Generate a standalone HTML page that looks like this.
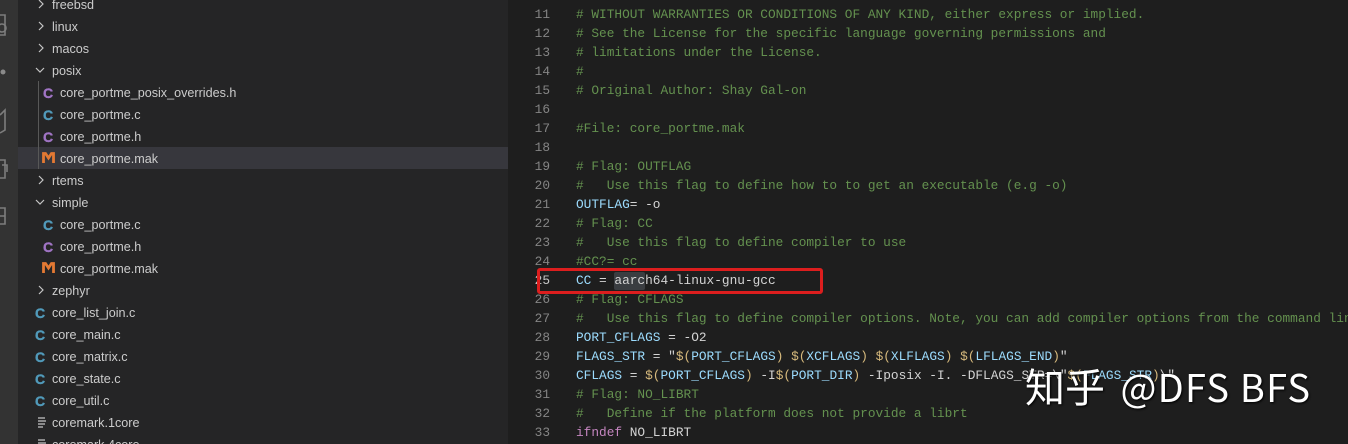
<!DOCTYPE html>
<html>
<head>
<meta charset="utf-8">
<style>
html,body{margin:0;padding:0;background:#1e1e1e;}
#p{position:relative;width:1348px;height:444px;overflow:hidden;background:#1e1e1e;}
#act{position:absolute;left:0;top:0;width:18px;height:444px;background:#333333;}
#side{position:absolute;left:18px;top:0;width:490px;height:444px;background:#252526;}
#sel{position:absolute;left:18px;top:147px;width:490px;height:22px;background:#37373d;}
#guide{position:absolute;left:38px;top:81px;width:1px;height:88px;background:#585858;}
.t{position:absolute;margin-top:1px;font:12.6px/22px "Liberation Sans",sans-serif;color:#cccccc;white-space:pre;height:22px;}
.c{position:absolute;margin-top:1px;font:bold 14px/22px "Liberation Sans",sans-serif;height:22px;-webkit-text-stroke:.4px currentColor;}
.b{color:#519aba}.v{color:#a074c4}
.ln{position:absolute;left:520px;width:30px;text-align:right;font:12.8px/19px "Liberation Mono",monospace;color:#858585;height:19px;}
.l{position:absolute;left:576px;font:12.8px/19px "Liberation Mono",monospace;color:#d4d4d4;white-space:pre;height:19px;}
.g{color:#64914f}.a{color:#9cdcfe}.o{color:#d7ba7d}.k{color:#c586c0}.d{color:#ce9178}
svg{position:absolute;overflow:visible;}
#hl{position:absolute;left:614px;top:272px;width:31px;height:18px;background:#3a3d41;border-radius:2px;}
#box{position:absolute;left:537px;top:268px;width:280px;height:20px;border:3px solid #dc1e1e;border-radius:3px;}
#wm{position:absolute;left:1025px;top:358px;font:38px/54px "Noto Sans CJK SC",sans-serif;color:#ffffff;white-space:pre;text-shadow:1px 1px 2px #000;}
#wm b{font-weight:400;font-size:40px;}
#wm i{font-style:normal;letter-spacing:1.2px;margin-left:7px;}
</style>
</head>
<body>
<div id="p">
<div id="act"></div>
<div id="side"></div>
<div id="sel"></div>
<div id="guide"></div>

<svg width="18" height="444" style="left:0;top:0" fill="none" stroke="#7d7d7d" stroke-width="1.6">
<path d="M0 15H5V35H0"/><circle cx="2" cy="28" r="4"/>
<circle cx="3" cy="72" r="2.5" fill="#8a8a8a" stroke="none"/>
<path d="M0 115L5 110V130L0 133"/>
<path d="M0 160H5V178H0M2 165H7V172"/>
<path d="M0 208H5V224H0M0 216H5"/>
</svg>

<svg width="12" height="444" style="left:36px;top:0" fill="none" stroke="#c5c5c5" stroke-width="1.2">
<path d="M3 0L7 4L3 8"/><path d="M3 22L7 26L3 30"/><path d="M3 44L7 48L3 52"/>
<path d="M0 68L4 72L8 68"/>
<path d="M3 176L7 180L3 184"/>
<path d="M0 200L4 204L8 200"/>
<path d="M3 286L7 290L3 294"/>
</svg>

<div class="t" style="left:52px;top:-7px">freebsd</div>
<div class="t" style="left:52px;top:15px">linux</div>
<div class="t" style="left:52px;top:37px">macos</div>
<div class="t" style="left:52px;top:59px">posix</div>
<div class="c v" style="left:43px;top:81px">C</div><div class="t" style="left:60px;top:81px">core_portme_posix_overrides.h</div>
<div class="c b" style="left:43px;top:103px">C</div><div class="t" style="left:60px;top:103px">core_portme.c</div>
<div class="c v" style="left:43px;top:125px">C</div><div class="t" style="left:60px;top:125px">core_portme.h</div>
<svg width="14" height="12" style="left:42px;top:152px"><path d="M1.5 11V1.5H3.5L6.5 6L9.5 1.5H11.5V11" fill="none" stroke="#e37933" stroke-width="2.8"/></svg>
<div class="t" style="left:60px;top:147px">core_portme.mak</div>
<div class="t" style="left:52px;top:169px">rtems</div>
<div class="t" style="left:52px;top:191px">simple</div>
<div class="c b" style="left:43px;top:213px">C</div><div class="t" style="left:60px;top:213px">core_portme.c</div>
<div class="c v" style="left:43px;top:235px">C</div><div class="t" style="left:60px;top:235px">core_portme.h</div>
<svg width="14" height="12" style="left:42px;top:262px"><path d="M1.5 11V1.5H3.5L6.5 6L9.5 1.5H11.5V11" fill="none" stroke="#e37933" stroke-width="2.8"/></svg>
<div class="t" style="left:60px;top:257px">core_portme.mak</div>
<div class="t" style="left:52px;top:279px">zephyr</div>
<div class="c b" style="left:35px;top:301px">C</div><div class="t" style="left:52px;top:301px">core_list_join.c</div>
<div class="c b" style="left:35px;top:323px">C</div><div class="t" style="left:52px;top:323px">core_main.c</div>
<div class="c b" style="left:35px;top:345px">C</div><div class="t" style="left:52px;top:345px">core_matrix.c</div>
<div class="c b" style="left:35px;top:367px">C</div><div class="t" style="left:52px;top:367px">core_state.c</div>
<div class="c b" style="left:35px;top:389px">C</div><div class="t" style="left:52px;top:389px">core_util.c</div>
<svg width="10" height="40" style="left:37px;top:417px" stroke="#c5c5c5" stroke-width="1.2" fill="none">
<path d="M1 1H8M1 4H9M1 7H8M1 10H6"/>
<path d="M1 23H8M1 26H9"/>
</svg>
<div class="t" style="left:52px;top:411px">coremark.1core</div>
<div class="t" style="left:52px;top:433px">coremark.4core</div>

<div id="hl"></div>

<div class="ln" style="top:5px">11</div><div class="l g" style="top:5px"># WITHOUT WARRANTIES OR CONDITIONS OF ANY KIND, either express or implied.</div>
<div class="ln" style="top:24px">12</div><div class="l g" style="top:24px"># See the License for the specific language governing permissions and</div>
<div class="ln" style="top:43px">13</div><div class="l g" style="top:43px"># limitations under the License.</div>
<div class="ln" style="top:62px">14</div><div class="l g" style="top:62px">#</div>
<div class="ln" style="top:81px">15</div><div class="l g" style="top:81px"># Original Author: Shay Gal-on</div>
<div class="ln" style="top:100px">16</div>
<div class="ln" style="top:119px">17</div><div class="l g" style="top:119px">#File: core_portme.mak</div>
<div class="ln" style="top:138px">18</div>
<div class="ln" style="top:157px">19</div><div class="l g" style="top:157px"># Flag: OUTFLAG</div>
<div class="ln" style="top:176px">20</div><div class="l g" style="top:176px">#   Use this flag to define how to to get an executable (e.g -o)</div>
<div class="ln" style="top:195px">21</div><div class="l" style="top:195px"><span class="a">OUTFLAG</span>= -o</div>
<div class="ln" style="top:214px">22</div><div class="l g" style="top:214px"># Flag: CC</div>
<div class="ln" style="top:233px">23</div><div class="l g" style="top:233px">#   Use this flag to define compiler to use</div>
<div class="ln" style="top:252px">24</div><div class="l g" style="top:252px">#CC?= cc</div>
<div class="ln" style="top:271px;color:#c6c6c6">25</div><div class="l" style="top:271px"><span class="a">CC</span> = aarch64-linux-gnu-gcc</div>
<div class="ln" style="top:290px">26</div><div class="l g" style="top:290px"># Flag: CFLAGS</div>
<div class="ln" style="top:309px">27</div><div class="l g" style="top:309px">#   Use this flag to define compiler options. Note, you can add compiler options from the command line</div>
<div class="ln" style="top:328px">28</div><div class="l" style="top:328px"><span class="a">PORT_CFLAGS</span> = -O2</div>
<div class="ln" style="top:347px">29</div><div class="l" style="top:347px"><span class="a">FLAGS_STR</span> = "<span class="o">$(</span><span class="a">PORT_CFLAGS</span><span class="o">)</span> <span class="o">$(</span><span class="a">XCFLAGS</span><span class="o">)</span> <span class="o">$(</span><span class="a">XLFLAGS</span><span class="o">)</span> <span class="o">$(</span><span class="a">LFLAGS_END</span><span class="o">)</span>"</div>
<div class="ln" style="top:366px">30</div><div class="l" style="top:366px"><span class="a">CFLAGS</span> = <span class="o">$(</span><span class="a">PORT_CFLAGS</span><span class="o">)</span> -I<span class="o">$(</span><span class="a">PORT_DIR</span><span class="o">)</span> -Iposix -I. -DFLAGS_STR=\"<span class="o">$(</span><span class="a">FLAGS_STR</span><span class="o">)</span>\"</div>
<div class="ln" style="top:385px">31</div><div class="l g" style="top:385px"># Flag: NO_LIBRT</div>
<div class="ln" style="top:404px">32</div><div class="l g" style="top:404px">#   Define if the platform does not provide a librt</div>
<div class="ln" style="top:423px">33</div><div class="l" style="top:423px"><span class="k">ifndef</span> NO_LIBRT</div>

<div id="box"></div>
<div id="wm"><b>知乎</b> <i>@DFS BFS</i></div>
</div>
</body>
</html>
